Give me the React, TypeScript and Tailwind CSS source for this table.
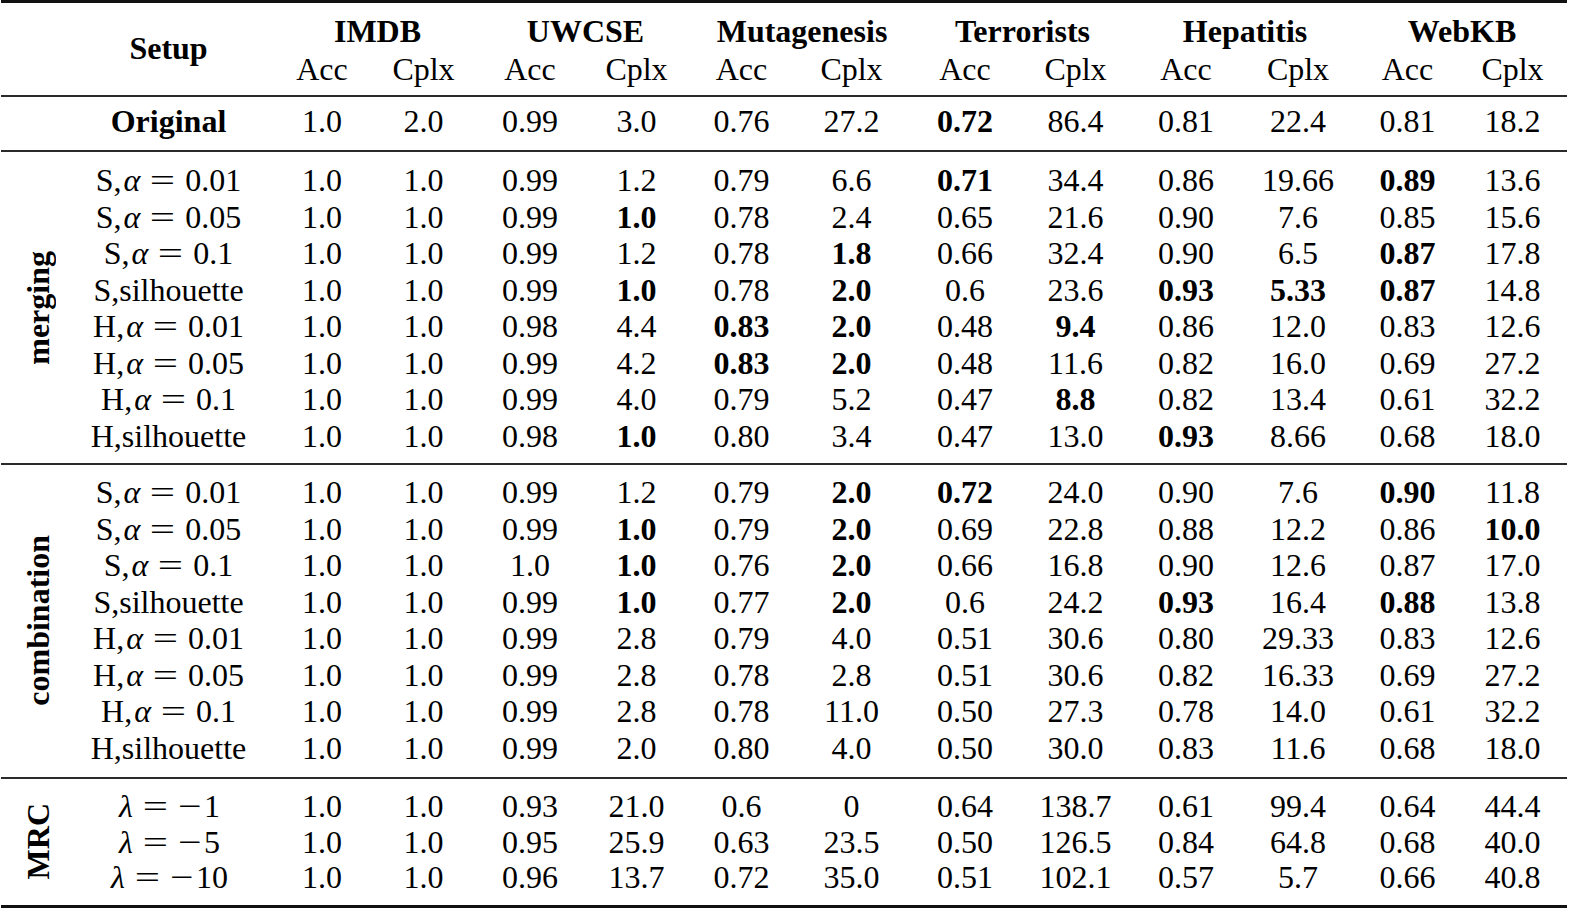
import React from "react";

const COLS =
  "grid grid-cols-[60px_215px_92px_111px_102px_111px_99px_121px_106px_115px_106px_118px_101px_109px]";

type Row = { label: React.ReactNode; vals: string[] };

const Eq = ({ pre, sym, val, minus }: { pre: string; sym: string; val: string; minus?: boolean }) => (
  <span className="whitespace-nowrap inline-flex items-center">
    {pre && <span>{pre}</span>}
    <span className="italic ml-[2px]">{sym}</span>
    <span className="inline-block w-[25px] text-center scale-x-[1.4] mx-[10px]">=</span>
    {minus && <span className="inline-block w-[23px] text-center scale-x-[1.3] mr-[3px]">−</span>}
    <span>{val}</span>
  </span>
);

const mk = (s: string) => s.split(" ");

const merging: Row[] = [
  { label: <Eq pre="S," sym="α" val="0.01" />, vals: mk("1.0 1.0 0.99 1.2 0.79 6.6 *0.71 34.4 0.86 19.66 *0.89 13.6") },
  { label: <Eq pre="S," sym="α" val="0.05" />, vals: mk("1.0 1.0 0.99 *1.0 0.78 2.4 0.65 21.6 0.90 7.6 0.85 15.6") },
  { label: <Eq pre="S," sym="α" val="0.1" />, vals: mk("1.0 1.0 0.99 1.2 0.78 *1.8 0.66 32.4 0.90 6.5 *0.87 17.8") },
  { label: "S,silhouette", vals: mk("1.0 1.0 0.99 *1.0 0.78 *2.0 0.6 23.6 *0.93 *5.33 *0.87 14.8") },
  { label: <Eq pre="H," sym="α" val="0.01" />, vals: mk("1.0 1.0 0.98 4.4 *0.83 *2.0 0.48 *9.4 0.86 12.0 0.83 12.6") },
  { label: <Eq pre="H," sym="α" val="0.05" />, vals: mk("1.0 1.0 0.99 4.2 *0.83 *2.0 0.48 11.6 0.82 16.0 0.69 27.2") },
  { label: <Eq pre="H," sym="α" val="0.1" />, vals: mk("1.0 1.0 0.99 4.0 0.79 5.2 0.47 *8.8 0.82 13.4 0.61 32.2") },
  { label: "H,silhouette", vals: mk("1.0 1.0 0.98 *1.0 0.80 3.4 0.47 13.0 *0.93 8.66 0.68 18.0") },
];

const combination: Row[] = [
  { label: <Eq pre="S," sym="α" val="0.01" />, vals: mk("1.0 1.0 0.99 1.2 0.79 *2.0 *0.72 24.0 0.90 7.6 *0.90 11.8") },
  { label: <Eq pre="S," sym="α" val="0.05" />, vals: mk("1.0 1.0 0.99 *1.0 0.79 *2.0 0.69 22.8 0.88 12.2 0.86 *10.0") },
  { label: <Eq pre="S," sym="α" val="0.1" />, vals: mk("1.0 1.0 1.0 *1.0 0.76 *2.0 0.66 16.8 0.90 12.6 0.87 17.0") },
  { label: "S,silhouette", vals: mk("1.0 1.0 0.99 *1.0 0.77 *2.0 0.6 24.2 *0.93 16.4 *0.88 13.8") },
  { label: <Eq pre="H," sym="α" val="0.01" />, vals: mk("1.0 1.0 0.99 2.8 0.79 4.0 0.51 30.6 0.80 29.33 0.83 12.6") },
  { label: <Eq pre="H," sym="α" val="0.05" />, vals: mk("1.0 1.0 0.99 2.8 0.78 2.8 0.51 30.6 0.82 16.33 0.69 27.2") },
  { label: <Eq pre="H," sym="α" val="0.1" />, vals: mk("1.0 1.0 0.99 2.8 0.78 11.0 0.50 27.3 0.78 14.0 0.61 32.2") },
  { label: "H,silhouette", vals: mk("1.0 1.0 0.99 2.0 0.80 4.0 0.50 30.0 0.83 11.6 0.68 18.0") },
];

const mrc: Row[] = [
  { label: <Eq pre="" sym="λ" val="1" minus />, vals: mk("1.0 1.0 0.93 21.0 0.6 0 0.64 138.7 0.61 99.4 0.64 44.4") },
  { label: <Eq pre="" sym="λ" val="5" minus />, vals: mk("1.0 1.0 0.95 25.9 0.63 23.5 0.50 126.5 0.84 64.8 0.68 40.0") },
  { label: <Eq pre="" sym="λ" val="10" minus />, vals: mk("1.0 1.0 0.96 13.7 0.72 35.0 0.51 102.1 0.57 5.7 0.66 40.8") },
];

const Cell = ({ v }: { v: string }) => {
  const bold = v.startsWith("*");
  return (
    <div className={"flex items-center justify-center " + (bold ? "font-bold" : "")}>
      {bold ? v.slice(1) : v}
    </div>
  );
};

const Rule = ({ thick }: { thick?: boolean }) => (
  <div className={thick ? "h-[3px] bg-[#111]" : "h-[2px] bg-[#2a2a2a]"} />
);

const Section = ({
  name,
  rows,
  rowH,
  pad,
}: {
  name: string;
  rows: Row[];
  rowH: string;
  pad: string;
}) => (
  <div className={"flex " + pad}>
    <div className="w-[60px] flex items-center justify-center pl-[14px]">
      <span className="font-bold [writing-mode:vertical-rl] rotate-180 leading-none whitespace-nowrap">
        {name}
      </span>
    </div>
    <div className="flex flex-col">
      {rows.map((r, i) => (
        <div key={i} className={"grid grid-cols-[215px_92px_111px_102px_111px_99px_121px_106px_115px_106px_118px_101px_109px] " + rowH}>
          <div className="flex items-center justify-center whitespace-nowrap">{r.label}</div>
          {r.vals.map((v, j) => (
            <Cell key={j} v={v} />
          ))}
        </div>
      ))}
    </div>
  </div>
);

const groups = ["IMDB", "UWCSE", "Mutagenesis", "Terrorists", "Hepatitis", "WebKB"];

export default function App() {
  return (
    <div className="w-[1572px] h-[912px] bg-white text-black overflow-hidden font-['Liberation_Serif','Times_New_Roman',serif] text-[32px] leading-[36.5px]">
      <div className="ml-[1px] w-[1566px] flex flex-col">
        <Rule thick />
        {/* header */}
        <div className={COLS + " pt-[9.5px] pb-[8px] grid-rows-[36.5px_36.5px] gap-y-[1.5px]"}>
          <div className="row-span-2" />
          <div className="row-span-2 flex items-center justify-center font-bold pb-[3px]">Setup</div>
          {groups.map((g) => (
            <div key={g} className="col-span-2 flex items-center justify-center font-bold">
              {g}
            </div>
          ))}
          {groups.map((g) => (
            <React.Fragment key={g}>
              <div className="flex items-center justify-center">Acc</div>
              <div className="flex items-center justify-center">Cplx</div>
            </React.Fragment>
          ))}
        </div>
        <Rule />
        {/* original */}
        <div className={COLS + " pt-[5.5px] pb-[11px] h-[53px] content-start"}>
          <div />
          <div className="flex items-center justify-center font-bold h-[36.5px]">Original</div>
          {mk("1.0 2.0 0.99 3.0 0.76 27.2 *0.72 86.4 0.81 22.4 0.81 18.2").map((v, j) => (
            <Cell key={j} v={v} />
          ))}
        </div>
        <Rule />
        <Section name="merging" rows={merging} rowH="h-[36.5px]" pad="pt-[10px] pb-[9px]" />
        <Rule />
        <Section name="combination" rows={combination} rowH="h-[36.5px]" pad="pt-[9px] pb-[11px]" />
        <Rule />
        <Section name="MRC" rows={mrc} rowH="h-[35.5px]" pad="pt-[9px] pb-[10.5px]" />
        <Rule thick />
      </div>
    </div>
  );
}
